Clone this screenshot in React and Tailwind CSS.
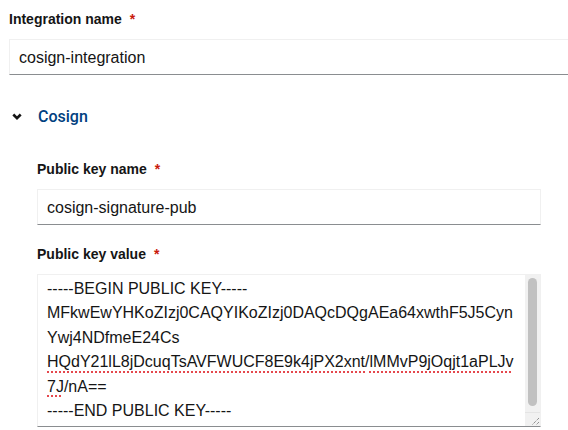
import React from 'react';

const font = { fontFamily: '"Liberation Sans", Arial, sans-serif' };

function Label({ children }) {
  return (
    <div className="flex items-center h-[20px] text-[14px] font-bold text-[#151515]">
      {children}
      <span className="ml-[8px] text-[#c9190b]">*</span>
    </div>
  );
}

function TextInput({ value, className = '' }) {
  return (
    <div
      className={`h-[36px] flex items-center px-[9px] pt-[1px] border border-[#f0f0f0] border-b-[#8a8d90] text-[16px] text-[#151515] bg-white ${className}`}
    >
      {value}
    </div>
  );
}

const spell = 'underline decoration-dotted decoration-[#e5484d] decoration-[2px] underline-offset-[4px]';

export default function App() {
  return (
    <div className="w-[568px] h-[430px] overflow-hidden bg-white" style={font}>
      <div className="pt-[9px] pl-[9px]">
        <Label>Integration name</Label>
        <TextInput value="cosign-integration" className="mt-[10px] w-[580px]" />

        <button className="mt-[30px] flex items-center h-[24px] text-[16px] font-medium text-[#004080]">
          <svg width="10" height="8" viewBox="0 0 10 8" className="ml-[3px] mr-[16px]">
            <path d="M1.3 1.5 L5 5.2 L8.7 1.5" fill="none" stroke="#151515" strokeWidth="2.6" />
          </svg>
          <span style={{ fontFamily: 'Roboto, "Liberation Sans", sans-serif' }}>Cosign</span>
        </button>

        <div className="ml-[28px] mt-[30px] w-[504px]">
          <Label>Public key name</Label>
          <TextInput value="cosign-signature-pub" className="mt-[10px]" />

          <div className="mt-[19px]">
            <Label>Public key value</Label>
          </div>
          <div className="relative mt-[10px] h-[153px] border border-[#f0f0f0] border-b-[#8a8d90] bg-white">
            <div className="pl-[9px] pt-[2px] pr-[20px] text-[16px] leading-[24.4px] text-[#151515] whitespace-nowrap">
              <div>-----BEGIN PUBLIC KEY-----</div>
              <div>MFkwEwYHKoZIzj0CAQYIKoZIzj0DAQcDQgAEa64xwthF5J5Cyn</div>
              <div>Ywj4NDfmeE24Cs</div>
              <div>
                <span className={spell}>HQdY21lL8jDcuqTsAVFWUCF8E9k4jPX2xnt</span>/
                <span className={spell}>lMMvP9jOqjt1aPLJv</span>
              </div>
              <div>
                <span className={spell}>7J</span>/nA==
              </div>
              <div>-----END PUBLIC KEY-----</div>
            </div>
            <div className="absolute right-0 top-0 bottom-0 w-[15px] bg-[#f1f1f1] flex flex-col">
              <div className="flex-1 px-[3px] pt-[3px] pb-[6px]">
                <div className="h-full rounded-full bg-[#c1c1c1]" />
              </div>
              <div className="h-[14px] bg-[#f1f1f1] border-t border-[#e4e4e4] flex items-end justify-end">
                <svg width="10" height="10" viewBox="0 0 10 10">
                  <path d="M9 2 L2 9 M9 6 L6 9" stroke="#666" strokeWidth="1" strokeDasharray="1 1" />
                </svg>
              </div>
            </div>
          </div>
        </div>
      </div>
    </div>
  );
}
